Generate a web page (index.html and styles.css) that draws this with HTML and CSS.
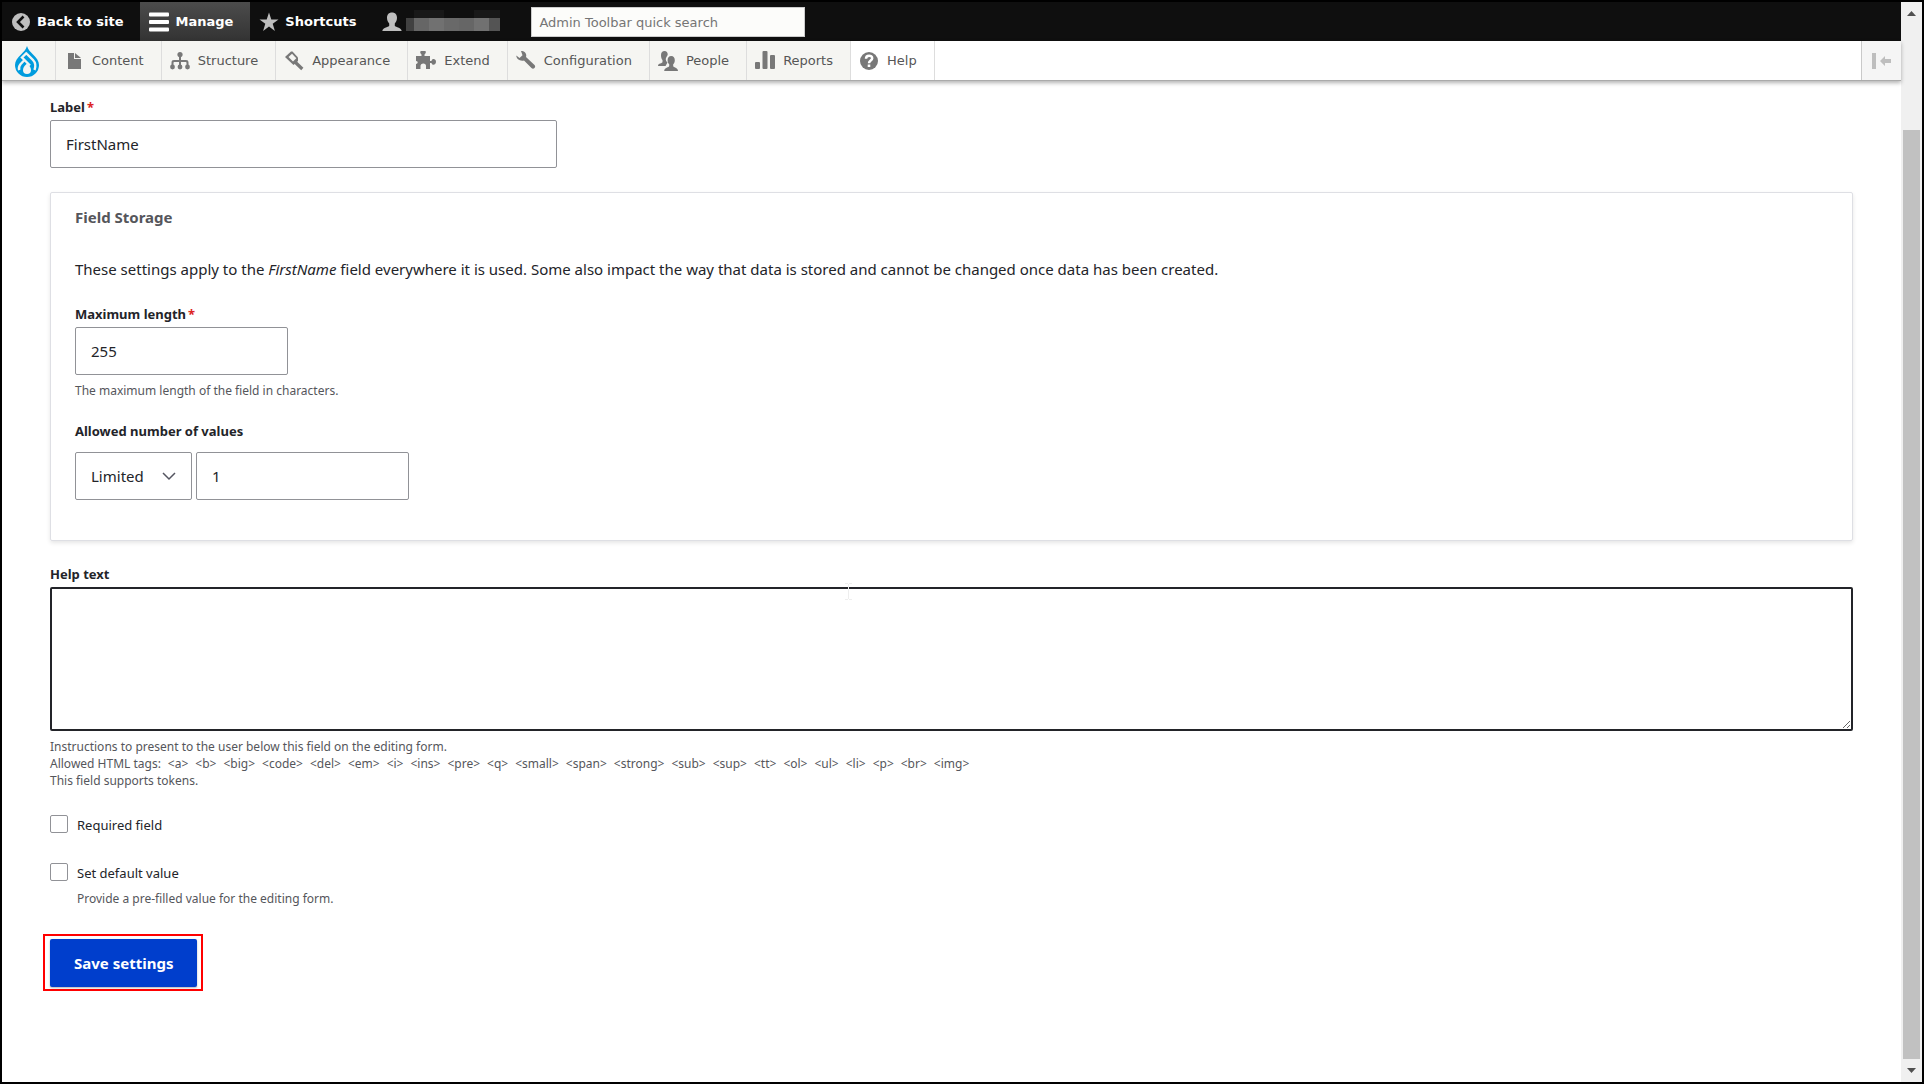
FILE: index.html
```html
<!DOCTYPE html>
<html lang="en" dir="ltr">
<head>
    <meta charset="UTF-8">
    <meta name="viewport" content="width=device-width, initial-scale=1.0">
    <title>FirstName settings</title>
    <link rel="stylesheet" href="styles.css">
</head>
<body>
    <div class="window">
        <div class="page">
            <!-- Toolbar -->
            <nav class="toolbar-bar">
                <a class="tab" href="#">
                    <svg class="icon" viewBox="0 0 20 20"><circle cx="10" cy="10" r="9" fill="#bebebe"/><path d="M12.5 4.5L7 10l5.500 5.500" fill="none" stroke="#0f0f0f" stroke-width="2.600"/></svg>
                    Back to site
                </a>
                <a class="tab active" href="#">
                    <svg class="icon" viewBox="0 0 20 20" fill="#fff"><rect y="0.500" width="20" height="4" rx="1"/><rect y="8" width="20" height="4" rx="1"/><rect y="15.500" width="20" height="4" rx="1"/></svg>
                    Manage
                </a>
                <a class="tab" href="#">
                    <svg class="icon" viewBox="0 0 20 20" fill="#bebebe"><path d="M10 0.500l2.300 6.900h7.200l-5.800 4.300 2.200 7.300-5.900-4.400L4.100 19l2.200-7.300L0.500 7.400h7.200z"/></svg>
                    Shortcuts
                </a>
                <a class="tab user" href="#" aria-label="User account">
                    <svg class="icon" viewBox="0 0 20 20" fill="#bebebe"><path d="M10 0.500c3.300 0 5 2.200 5 5.300 0 2.300-.9 4.300-2.200 5.700v2.300c0 1.200 6.400 1.500 6.900 5.200H.3c.5-3.700 6.900-4 6.900-5.200v-2.300C5.900 10.100 5 8.100 5 5.800 5 2.700 6.700.5 10 .5z"/></svg>
                    <svg class="username" viewBox="0 0 94 21" shape-rendering="crispEdges">
                        <path d="M8 0h30v8H8zM68 0h26v8H68z" fill="#181818"/>
                        <path d="M0 8h8v13H0z" fill="#414141"/>
                        <path d="M8 8h15v13H8zM53 8h15v13H53z" fill="#666"/>
                        <path d="M23 8h15v13H23zM68 8h15v13H68z" fill="#717171"/>
                        <path d="M38 8h15v13H38z" fill="#696969"/>
                        <path d="M83 8h11v13H83z" fill="#545454"/>
                    </svg>
                </a>
                <input class="quick-search" type="search" placeholder="Admin Toolbar quick search" aria-label="Admin Toolbar quick search">
            </nav>

            <!-- Administration menu -->
            <nav class="toolbar-tray">
                <a class="menu-item home" href="#" aria-label="Tools">
                    <svg class="logo" viewBox="0 0 24 31"><path d="M12 0c1 3.500 3.500 6 6 8.500 3.500 3.500 6 6.500 6 10.500a12 12 0 0 1-24 0C0 15 2.500 12 6 8.500 8.500 6 11 3.500 12 0z" fill="#009cde"/><path d="M12 6.500L7 11.500l8 8M9 14.500l-3.500 3.700c-1.700 2-1.900 4-1.300 6M11.500 7.500l6.500 6.500c2.800 3 2.800 6.500 1.500 10" fill="none" stroke="#f5f5f2" stroke-width="2.400"/><path d="M12 17.500c2.700 2.600 4 4.200 4 6.500a4 4 0 0 1-8 0c0-2.300 1.300-3.900 4-6.500z" fill="#f5f5f2"/></svg>
                </a>
                <a class="menu-item" href="#">
                    <svg class="icon" viewBox="0 0 20 20" fill="#787878"><path d="M4 2h6v6h7v10H4z"/><path d="M11 2l6 5h-6z"/></svg>
                    Content
                </a>
                <a class="menu-item" href="#">
                    <svg class="icon" viewBox="0 0 20 20" fill="#787878"><circle cx="10" cy="3.500" r="2.600"/><path d="M9 5h2v4h5c1.700 0 2.500.8 2.500 2.500V15h-2v-3c0-.7-.3-1-1-1H11v4H9v-4H4.500c-.7 0-1 .3-1 1v3h-2v-3.500C1.500 9.800 2.300 9 4 9h5z"/><circle cx="2.500" cy="16" r="2.400"/><circle cx="10" cy="16" r="2.400"/><circle cx="17.500" cy="16" r="2.400"/></svg>
                    Structure
                </a>
                <a class="menu-item" href="#">
                    <svg class="icon" viewBox="0 0 20 20"><path d="M7 .5h1.500l5.500 6v3.500L9.500 14 1 6z" fill="#787878"/><path d="M4.500 6L8 2.800l4.300 4.500L9 10.500z" fill="#f5f5f2"/><path d="M10.500 10.500l7.800 7.500" stroke="#787878" stroke-width="3.200" fill="none"/></svg>
                    Appearance
                </a>
                <a class="menu-item" href="#">
                    <svg class="icon" viewBox="0 0 20 20" fill="#787878"><path d="M0 5h5.500V3.500C4 2.500 3.800 0 5 0h4c1.300 0 1 2.500-.5 3.500V5H14v5h1.500c.5-3 4.500-2.500 4.500.8s-4 4-4.500 1.200H14v6h-4v-2.500c.7-4-6-4-5.500 0V18H0v-5c2 0 2.500-3 0-3z"/></svg>
                    Extend
                </a>
                <a class="menu-item" href="#">
                    <svg class="icon" viewBox="0 0 20 20" fill="#787878"><path d="M5 0c4 0 6 3 5 6l8.500 8c2 2-1 5-3 3L8 9.500C4 10.500.3 8 .3 4.500L3.500 7l3-2.700z"/></svg>
                    Configuration
                </a>
                <a class="menu-item" href="#">
                    <svg class="icon" viewBox="0 0 20 20" fill="#787878"><path d="M6.500 0c2 0 3.200 1.500 3.200 3.300 0 1-.5 1.700-1.100 2.500C7.300 8 7.500 10 9.500 11.500L7.500 15H0c0-3 4.500-2.500 4.500-4V9C3.500 8 3 6.500 3 4c0-2.500 1.500-4 3.500-4z"/><path d="M13.200 5c2.400 0 3.600 1.700 3.600 4.300 0 1.700-.5 3-1.600 4v1.700c0 1.400 4.800 1.500 4.800 5H6.200c0-3.500 5-3.600 5-5v-1.700c-1.100-1-1.600-2.300-1.600-4C9.600 6.700 10.800 5 13.200 5z"/></svg>
                    People
                </a>
                <a class="menu-item" href="#">
                    <svg class="icon" viewBox="0 0 20 20" fill="#787878"><rect y="11" width="5" height="7" rx="1"/><rect x="7.500" width="5" height="18" rx="1"/><rect x="15" y="4" width="5" height="14" rx="1"/></svg>
                    Reports
                </a>
                <a class="menu-item current" href="#">
                    <svg class="icon" viewBox="0 0 20 20"><circle cx="10" cy="10" r="9" fill="#787878"/><path d="M7 7.800C7 3.500 13.200 4 13.200 7.200c0 2.300-3.200 2.300-3.200 5" fill="none" stroke="#fff" stroke-width="2.500"/><rect x="8.700" y="13.500" width="2.600" height="2.500" fill="#fff"/></svg>
                    Help
                </a>
                <button class="orientation" type="button" aria-label="Vertical orientation">
                    <svg class="icon" viewBox="0 0 20 20" fill="#bebebe"><rect x="1" y="2" width="4" height="16"/><path d="M9 10l5-5v3h6v4h-6v3z"/></svg>
                </button>
            </nav>

            <!-- Field settings form -->
            <form class="content">
                <label class="form-label required" for="label">Label</label>
                <input class="text-input wide" type="text" id="label" value="FirstName">

                <fieldset class="card">
                    <h2>Field Storage</h2>
                    <p>These settings apply to the <em>FirstName</em> field everywhere it is used. Some also impact the way that data is stored and cannot be changed once data has been created.</p>
                    <label class="form-label required" for="max-length">Maximum length</label>
                    <input class="text-input" type="text" id="max-length" value="255">
                    <div class="description">The maximum length of the field in characters.</div>
                    <label class="form-label cardinality-label" for="cardinality">Allowed number of values</label>
                    <div class="cardinality">
                        <select id="cardinality">
                            <option>Limited</option>
                            <option>Unlimited</option>
                        </select>
                        <input class="text-input" type="text" value="1" aria-label="Limit">
                    </div>
                </fieldset>

                <label class="form-label" for="help-text">Help text</label>
                <div class="textarea-wrapper">
                    <textarea id="help-text"></textarea>
                    <svg class="cursor" viewBox="0 0 9 17"><path d="M1 .5h3M5 .5h3M4.500 1v15M1 16.500h3M5 16.500h3" fill="none" stroke="#eee"/></svg>
                </div>
                <div class="description">
                    <div>Instructions to present to the user below this field on the editing form.</div>
                    <div class="tags">
                        <span>Allowed HTML tags:</span>
                        <span>&lt;a&gt;</span> <span>&lt;b&gt;</span> <span>&lt;big&gt;</span> <span>&lt;code&gt;</span>
                        <span>&lt;del&gt;</span> <span>&lt;em&gt;</span> <span>&lt;i&gt;</span> <span>&lt;ins&gt;</span>
                        <span>&lt;pre&gt;</span> <span>&lt;q&gt;</span> <span>&lt;small&gt;</span> <span>&lt;span&gt;</span>
                        <span>&lt;strong&gt;</span> <span>&lt;sub&gt;</span> <span>&lt;sup&gt;</span> <span>&lt;tt&gt;</span>
                        <span>&lt;ol&gt;</span> <span>&lt;ul&gt;</span> <span>&lt;li&gt;</span> <span>&lt;p&gt;</span>
                        <span>&lt;br&gt;</span> <span>&lt;img&gt;</span>
                    </div>
                    <div>This field supports tokens.</div>
                </div>

                <div class="check-item">
                    <input type="checkbox" id="required-field">
                    <label for="required-field">Required field</label>
                </div>
                <div class="check-item">
                    <input type="checkbox" id="default-value">
                    <label for="default-value">Set default value</label>
                    <div class="description">Provide a pre-filled value for the editing form.</div>
                </div>

                <div class="highlight">
                    <button class="save" type="button">Save settings</button>
                </div>
            </form>
        </div>

        <div class="scrollbar">
            <svg class="arrow" viewBox="0 0 9 5"><path d="M4.500 0L9 5H0z" fill="#505050"/></svg>
            <div class="thumb"></div>
            <svg class="arrow" viewBox="0 0 9 5"><path d="M4.500 5L9 0H0z" fill="#505050"/></svg>
        </div>
    </div>
</body>
</html>
```
FILE: styles.css
```css
* {
    box-sizing: border-box;
}
body {
    margin: 0;
    font-family: "Noto Sans", "Open Sans", sans-serif;
    font-size: 15px;
    line-height: 24px;
    color: #232429;
    background-color: #fff;
}
.window {
    display: flex;
    min-height: 100vh;
    border: 2px solid #000;
}
.page {
    flex: 1;
    min-width: 0;
}
.icon {
    width: 20px;
    height: 20px;
    flex: none;
}

/* toolbar */
.toolbar-bar, .toolbar-tray {
    display: flex;
    font-family: "DejaVu Sans", sans-serif;
    font-size: 13px;
}
.toolbar-bar {
    height: 39px;
    align-items: center;
    background-color: #0f0f0f;
}
.tab {
    display: flex;
    align-items: center;
    gap: 6px;
    height: 39px;
    padding: 0 17px 0 9px;
    color: #fff;
    font-weight: bold;
    text-decoration: none;
}
.tab.active {
    background-image: linear-gradient(#4c4c4c, #333);
}
.tab.user {
    gap: 4px;
}
.username {
    width: 94px;
    height: 21px;
    margin-bottom: 3px;
}
.quick-search {
    width: 274px;
    height: 30px;
    margin-left: 14px;
    padding: 1px 7px 0;
    border: 1px solid #ccc;
    background-color: #fcfcfa;
    font: inherit;
}
.quick-search::placeholder {
    color: #757575;
}
.toolbar-tray {
    position: relative;
    height: 40px;
    border-bottom: 1px solid #aaa;
    box-shadow: 0 2px 4px rgba(0, 0, 0, 0.3);
}
.menu-item {
    display: flex;
    align-items: center;
    gap: 8px;
    padding: 0 17px 0 8px;
    border-right: 1px solid #ddd;
    background-color: #f5f5f2;
    color: #565656;
    text-decoration: none;
}
.menu-item.home {
    width: 54px;
    padding: 2px 0 0 13px;
}
.menu-item.current {
    background-color: #fff;
}
.logo {
    width: 24px;
    height: 31px;
}
.orientation {
    display: flex;
    align-items: center;
    width: 40px;
    margin-left: auto;
    padding: 0 9px;
    border: 0;
    border-left: 1px solid #c9c9c9;
    background-color: #f5f5f5;
}

/* form */
.content {
    padding: 17px 48px 40px;
}
.form-label {
    display: block;
    margin-bottom: 4px;
    font-size: 13px;
    font-weight: bold;
    line-height: 18px;
}
.required::after {
    content: "*";
    margin-left: 2px;
    color: #dc2323;
}
.text-input, select {
    display: block;
    width: 213px;
    height: 48px;
    padding: 0 15px;
    border: 1px solid #919297;
    border-radius: 2px;
    background-color: #fff;
    color: #232429;
    font: inherit;
}
.text-input.wide {
    width: 507px;
}
.card {
    margin: 24px 0;
    padding: 12px 24px 40px;
    border: 1px solid #dedfe4;
    border-radius: 2px;
    box-shadow: 0 2px 4px rgba(0, 0, 0, 0.1);
}
h2 {
    margin: 0;
    color: #55565b;
    font-size: 15px;
    line-height: 24px;
}
p {
    margin: 28px 0 24px;
}
.description {
    margin-top: 7px;
    color: #55565b;
    font-size: 12px;
    line-height: 17px;
}
.tags {
    display: flex;
    flex-wrap: wrap;
    gap: 0 7px;
}
.cardinality-label {
    margin: 23px 0 12px;
}
.cardinality {
    display: flex;
    gap: 4px;
}
select {
    width: 117px;
    appearance: none;
    background: url("data:image/svg+xml,%3Csvg xmlns='http://www.w3.org/2000/svg' width='14' height='9'%3E%3Cpath d='M1 1l6 6 6-6' fill='none' stroke='%23545560' stroke-width='1.500'/%3E%3C/svg%3E") no-repeat right 15px center;
}
.textarea-wrapper {
    position: relative;
}
textarea {
    display: block;
    width: 100%;
    height: 144px;
    border: 2px solid #232429;
    border-radius: 2px;
}
.cursor {
    position: absolute;
    top: -4px;
    left: 794px;
    width: 9px;
    height: 17px;
}
.check-item {
    display: grid;
    grid-template-columns: 18px 1fr;
    column-gap: 9px;
    margin-top: 28px;
    font-size: 13px;
    line-height: 20px;
}
.textarea-wrapper + .description + .check-item {
    margin-top: 26px;
}
.check-item input {
    width: 18px;
    height: 18px;
    margin: 0;
    appearance: none;
    border: 1px solid #919297;
    border-radius: 2px;
}
.check-item .description {
    grid-column: 2;
}
.highlight {
    display: inline-block;
    margin: 27px 0 0 -7px;
    padding: 3px 4px 2px 5px;
    border: 2px solid #f00;
}
.save {
    display: block;
    height: 48px;
    padding: 0 24px;
    border: 0;
    border-radius: 2px;
    background-color: #003ecc;
    box-shadow: 0 1px 2px rgba(0, 0, 0, 0.3);
    color: #fff;
    font: inherit;
    font-weight: bold;
}

/* scrollbar */
.scrollbar {
    display: flex;
    flex-direction: column;
    align-items: center;
    width: 21px;
    padding: 9px 2px;
    background-color: #f0f0f0;
}
.arrow {
    width: 9px;
    height: 5px;
}
.thumb {
    flex: 1;
    width: 17px;
    margin: 114px 0 9px;
    background-color: #c1c1c1;
}
```
